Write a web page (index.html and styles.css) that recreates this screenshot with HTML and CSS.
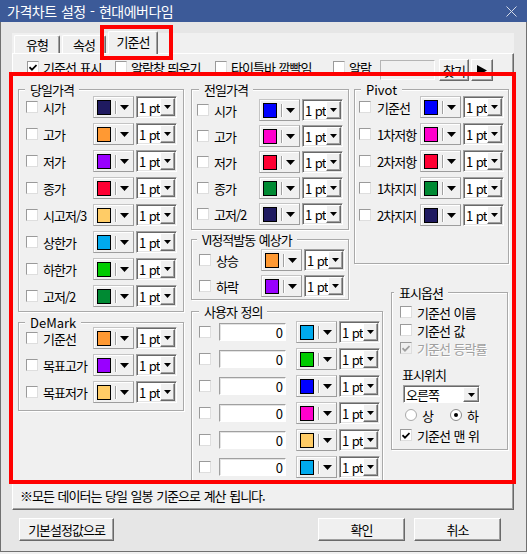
FILE: index.html
```html
<!DOCTYPE html>
<html lang="ko">
<head>
<meta charset="utf-8">
<title>가격차트 설정</title>
<link rel="stylesheet" href="styles.css">
</head>
<body>
<div class="window">
  <div class="titlebar">
    <span class="title">가격차트 설정 - 현대에버다임</span>
    <svg class="close" width="11" height="11" viewBox="0 0 11 11"><path d="M0.5 0.5L10.5 10.5M10.5 0.5L0.5 10.5" stroke="#d5dbe8" stroke-width="1" fill="none"/></svg>
  </div>
  <div class="frame">
    <div class="tabctl">
      <div class="tabs">
        <div class="tab t1">유형</div>
        <div class="tab t2">속성</div>
        <div class="tab t3">기준선</div>
      </div>
      <div class="panel">
        <div class="toprow">
          <div class="opt o1"><span class="cb"><svg width="8" height="7" viewBox="0 0 8 7"><path d="M0.5 3.2L3 5.7L7.5 1" fill="none" stroke="#000" stroke-width="1.7"/></svg></span><span>기준선 표시</span></div>
          <div class="opt o2"><span class="cb"></span><span>알람창 띄우기</span></div>
          <div class="opt o3"><span class="cb"></span><span>타이틀바 깜빡임</span></div>
          <div class="opt o4"><span class="cb"></span><span>알람</span></div>
          <span class="field"></span>
          <span class="btn find">찾기</span>
          <span class="btn play"><svg width="10" height="11" viewBox="0 0 10 11"><path d="M0 0L10 5.5L0 11Z"/></svg></span>
        </div>

        <div class="groups">
          <div class="col c1">
            <div class="group g-today">
              <div class="gt">당일가격</div>
              <div class="rows">
                <div class="row"><span class="cb"></span><span class="lbl">시가</span><span class="cc"><span class="sw k-navy"></span><span class="sep"></span><svg class="arr" width="9" height="5" viewBox="0 0 9 5"><path d="M0 0H9L4.5 5Z"/></svg></span><span class="pt"><span class="ptv">1 pt</span><span class="dd"><svg width="7" height="4" viewBox="0 0 7 4"><path d="M0 0H7L3.5 4Z"/></svg></span></span></div>
                <div class="row"><span class="cb"></span><span class="lbl">고가</span><span class="cc"><span class="sw k-orange"></span><span class="sep"></span><svg class="arr" width="9" height="5" viewBox="0 0 9 5"><path d="M0 0H9L4.5 5Z"/></svg></span><span class="pt"><span class="ptv">1 pt</span><span class="dd"><svg width="7" height="4" viewBox="0 0 7 4"><path d="M0 0H7L3.5 4Z"/></svg></span></span></div>
                <div class="row"><span class="cb"></span><span class="lbl">저가</span><span class="cc"><span class="sw k-purple"></span><span class="sep"></span><svg class="arr" width="9" height="5" viewBox="0 0 9 5"><path d="M0 0H9L4.5 5Z"/></svg></span><span class="pt"><span class="ptv">1 pt</span><span class="dd"><svg width="7" height="4" viewBox="0 0 7 4"><path d="M0 0H7L3.5 4Z"/></svg></span></span></div>
                <div class="row"><span class="cb"></span><span class="lbl">종가</span><span class="cc"><span class="sw k-red"></span><span class="sep"></span><svg class="arr" width="9" height="5" viewBox="0 0 9 5"><path d="M0 0H9L4.5 5Z"/></svg></span><span class="pt"><span class="ptv">1 pt</span><span class="dd"><svg width="7" height="4" viewBox="0 0 7 4"><path d="M0 0H7L3.5 4Z"/></svg></span></span></div>
                <div class="row"><span class="cb"></span><span class="lbl">시고저/3</span><span class="cc"><span class="sw k-cream"></span><span class="sep"></span><svg class="arr" width="9" height="5" viewBox="0 0 9 5"><path d="M0 0H9L4.5 5Z"/></svg></span><span class="pt"><span class="ptv">1 pt</span><span class="dd"><svg width="7" height="4" viewBox="0 0 7 4"><path d="M0 0H7L3.5 4Z"/></svg></span></span></div>
                <div class="row"><span class="cb"></span><span class="lbl">상한가</span><span class="cc"><span class="sw k-sky"></span><span class="sep"></span><svg class="arr" width="9" height="5" viewBox="0 0 9 5"><path d="M0 0H9L4.5 5Z"/></svg></span><span class="pt"><span class="ptv">1 pt</span><span class="dd"><svg width="7" height="4" viewBox="0 0 7 4"><path d="M0 0H7L3.5 4Z"/></svg></span></span></div>
                <div class="row"><span class="cb"></span><span class="lbl">하한가</span><span class="cc"><span class="sw k-lime"></span><span class="sep"></span><svg class="arr" width="9" height="5" viewBox="0 0 9 5"><path d="M0 0H9L4.5 5Z"/></svg></span><span class="pt"><span class="ptv">1 pt</span><span class="dd"><svg width="7" height="4" viewBox="0 0 7 4"><path d="M0 0H7L3.5 4Z"/></svg></span></span></div>
                <div class="row"><span class="cb"></span><span class="lbl">고저/2</span><span class="cc"><span class="sw k-green"></span><span class="sep"></span><svg class="arr" width="9" height="5" viewBox="0 0 9 5"><path d="M0 0H9L4.5 5Z"/></svg></span><span class="pt"><span class="ptv">1 pt</span><span class="dd"><svg width="7" height="4" viewBox="0 0 7 4"><path d="M0 0H7L3.5 4Z"/></svg></span></span></div>
              </div>
            </div>
            <div class="group g-demark">
              <div class="gt latin">DeMark</div>
              <div class="rows">
                <div class="row"><span class="cb"></span><span class="lbl">기준선</span><span class="cc"><span class="sw k-orange"></span><span class="sep"></span><svg class="arr" width="9" height="5" viewBox="0 0 9 5"><path d="M0 0H9L4.5 5Z"/></svg></span><span class="pt"><span class="ptv">1 pt</span><span class="dd"><svg width="7" height="4" viewBox="0 0 7 4"><path d="M0 0H7L3.5 4Z"/></svg></span></span></div>
                <div class="row"><span class="cb"></span><span class="lbl">목표고가</span><span class="cc"><span class="sw k-purple"></span><span class="sep"></span><svg class="arr" width="9" height="5" viewBox="0 0 9 5"><path d="M0 0H9L4.5 5Z"/></svg></span><span class="pt"><span class="ptv">1 pt</span><span class="dd"><svg width="7" height="4" viewBox="0 0 7 4"><path d="M0 0H7L3.5 4Z"/></svg></span></span></div>
                <div class="row"><span class="cb"></span><span class="lbl">목표저가</span><span class="cc"><span class="sw k-cream"></span><span class="sep"></span><svg class="arr" width="9" height="5" viewBox="0 0 9 5"><path d="M0 0H9L4.5 5Z"/></svg></span><span class="pt"><span class="ptv">1 pt</span><span class="dd"><svg width="7" height="4" viewBox="0 0 7 4"><path d="M0 0H7L3.5 4Z"/></svg></span></span></div>
              </div>
            </div>
          </div>

          <div class="col c2">
            <div class="group g-prev">
              <div class="gt">전일가격</div>
              <div class="rows">
                <div class="row"><span class="cb"></span><span class="lbl">시가</span><span class="cc"><span class="sw k-blue"></span><span class="sep"></span><svg class="arr" width="9" height="5" viewBox="0 0 9 5"><path d="M0 0H9L4.5 5Z"/></svg></span><span class="pt"><span class="ptv">1 pt</span><span class="dd"><svg width="7" height="4" viewBox="0 0 7 4"><path d="M0 0H7L3.5 4Z"/></svg></span></span></div>
                <div class="row"><span class="cb"></span><span class="lbl">고가</span><span class="cc"><span class="sw k-mag"></span><span class="sep"></span><svg class="arr" width="9" height="5" viewBox="0 0 9 5"><path d="M0 0H9L4.5 5Z"/></svg></span><span class="pt"><span class="ptv">1 pt</span><span class="dd"><svg width="7" height="4" viewBox="0 0 7 4"><path d="M0 0H7L3.5 4Z"/></svg></span></span></div>
                <div class="row"><span class="cb"></span><span class="lbl">저가</span><span class="cc"><span class="sw k-red"></span><span class="sep"></span><svg class="arr" width="9" height="5" viewBox="0 0 9 5"><path d="M0 0H9L4.5 5Z"/></svg></span><span class="pt"><span class="ptv">1 pt</span><span class="dd"><svg width="7" height="4" viewBox="0 0 7 4"><path d="M0 0H7L3.5 4Z"/></svg></span></span></div>
                <div class="row"><span class="cb"></span><span class="lbl">종가</span><span class="cc"><span class="sw k-green"></span><span class="sep"></span><svg class="arr" width="9" height="5" viewBox="0 0 9 5"><path d="M0 0H9L4.5 5Z"/></svg></span><span class="pt"><span class="ptv">1 pt</span><span class="dd"><svg width="7" height="4" viewBox="0 0 7 4"><path d="M0 0H7L3.5 4Z"/></svg></span></span></div>
                <div class="row"><span class="cb"></span><span class="lbl">고저/2</span><span class="cc"><span class="sw k-navy"></span><span class="sep"></span><svg class="arr" width="9" height="5" viewBox="0 0 9 5"><path d="M0 0H9L4.5 5Z"/></svg></span><span class="pt"><span class="ptv">1 pt</span><span class="dd"><svg width="7" height="4" viewBox="0 0 7 4"><path d="M0 0H7L3.5 4Z"/></svg></span></span></div>
              </div>
            </div>
            <div class="group g-vi">
              <div class="gt">VI정적발동 예상가</div>
              <div class="rows">
                <div class="row"><span class="cb"></span><span class="lbl">상승</span><span class="cc"><span class="sw k-orange"></span><span class="sep"></span><svg class="arr" width="9" height="5" viewBox="0 0 9 5"><path d="M0 0H9L4.5 5Z"/></svg></span><span class="pt"><span class="ptv">1 pt</span><span class="dd"><svg width="7" height="4" viewBox="0 0 7 4"><path d="M0 0H7L3.5 4Z"/></svg></span></span></div>
                <div class="row"><span class="cb"></span><span class="lbl">하락</span><span class="cc"><span class="sw k-purple"></span><span class="sep"></span><svg class="arr" width="9" height="5" viewBox="0 0 9 5"><path d="M0 0H9L4.5 5Z"/></svg></span><span class="pt"><span class="ptv">1 pt</span><span class="dd"><svg width="7" height="4" viewBox="0 0 7 4"><path d="M0 0H7L3.5 4Z"/></svg></span></span></div>
              </div>
            </div>
            <div class="group g-user">
              <div class="gt">사용자 정의</div>
              <div class="rows">
                <div class="row"><span class="cb"></span><span class="inp">0</span><span class="cc"><span class="sw k-sky"></span><span class="sep"></span><svg class="arr" width="9" height="5" viewBox="0 0 9 5"><path d="M0 0H9L4.5 5Z"/></svg></span><span class="pt"><span class="ptv">1 pt</span><span class="dd"><svg width="7" height="4" viewBox="0 0 7 4"><path d="M0 0H7L3.5 4Z"/></svg></span></span></div>
                <div class="row"><span class="cb"></span><span class="inp">0</span><span class="cc"><span class="sw k-lime"></span><span class="sep"></span><svg class="arr" width="9" height="5" viewBox="0 0 9 5"><path d="M0 0H9L4.5 5Z"/></svg></span><span class="pt"><span class="ptv">1 pt</span><span class="dd"><svg width="7" height="4" viewBox="0 0 7 4"><path d="M0 0H7L3.5 4Z"/></svg></span></span></div>
                <div class="row"><span class="cb"></span><span class="inp">0</span><span class="cc"><span class="sw k-blue"></span><span class="sep"></span><svg class="arr" width="9" height="5" viewBox="0 0 9 5"><path d="M0 0H9L4.5 5Z"/></svg></span><span class="pt"><span class="ptv">1 pt</span><span class="dd"><svg width="7" height="4" viewBox="0 0 7 4"><path d="M0 0H7L3.5 4Z"/></svg></span></span></div>
                <div class="row"><span class="cb"></span><span class="inp">0</span><span class="cc"><span class="sw k-mag"></span><span class="sep"></span><svg class="arr" width="9" height="5" viewBox="0 0 9 5"><path d="M0 0H9L4.5 5Z"/></svg></span><span class="pt"><span class="ptv">1 pt</span><span class="dd"><svg width="7" height="4" viewBox="0 0 7 4"><path d="M0 0H7L3.5 4Z"/></svg></span></span></div>
                <div class="row"><span class="cb"></span><span class="inp">0</span><span class="cc"><span class="sw k-cream"></span><span class="sep"></span><svg class="arr" width="9" height="5" viewBox="0 0 9 5"><path d="M0 0H9L4.5 5Z"/></svg></span><span class="pt"><span class="ptv">1 pt</span><span class="dd"><svg width="7" height="4" viewBox="0 0 7 4"><path d="M0 0H7L3.5 4Z"/></svg></span></span></div>
                <div class="row"><span class="cb"></span><span class="inp">0</span><span class="cc"><span class="sw k-sky"></span><span class="sep"></span><svg class="arr" width="9" height="5" viewBox="0 0 9 5"><path d="M0 0H9L4.5 5Z"/></svg></span><span class="pt"><span class="ptv">1 pt</span><span class="dd"><svg width="7" height="4" viewBox="0 0 7 4"><path d="M0 0H7L3.5 4Z"/></svg></span></span></div>
              </div>
            </div>
          </div>

          <div class="col c3">
            <div class="group g-pivot">
              <div class="gt latin">Pivot</div>
              <div class="rows">
                <div class="row"><span class="cb"></span><span class="lbl">기준선</span><span class="cc"><span class="sw k-blue"></span><span class="sep"></span><svg class="arr" width="9" height="5" viewBox="0 0 9 5"><path d="M0 0H9L4.5 5Z"/></svg></span><span class="pt"><span class="ptv">1 pt</span><span class="dd"><svg width="7" height="4" viewBox="0 0 7 4"><path d="M0 0H7L3.5 4Z"/></svg></span></span></div>
                <div class="row"><span class="cb"></span><span class="lbl">1차저항</span><span class="cc"><span class="sw k-mag"></span><span class="sep"></span><svg class="arr" width="9" height="5" viewBox="0 0 9 5"><path d="M0 0H9L4.5 5Z"/></svg></span><span class="pt"><span class="ptv">1 pt</span><span class="dd"><svg width="7" height="4" viewBox="0 0 7 4"><path d="M0 0H7L3.5 4Z"/></svg></span></span></div>
                <div class="row"><span class="cb"></span><span class="lbl">2차저항</span><span class="cc"><span class="sw k-red"></span><span class="sep"></span><svg class="arr" width="9" height="5" viewBox="0 0 9 5"><path d="M0 0H9L4.5 5Z"/></svg></span><span class="pt"><span class="ptv">1 pt</span><span class="dd"><svg width="7" height="4" viewBox="0 0 7 4"><path d="M0 0H7L3.5 4Z"/></svg></span></span></div>
                <div class="row"><span class="cb"></span><span class="lbl">1차지지</span><span class="cc"><span class="sw k-green"></span><span class="sep"></span><svg class="arr" width="9" height="5" viewBox="0 0 9 5"><path d="M0 0H9L4.5 5Z"/></svg></span><span class="pt"><span class="ptv">1 pt</span><span class="dd"><svg width="7" height="4" viewBox="0 0 7 4"><path d="M0 0H7L3.5 4Z"/></svg></span></span></div>
                <div class="row"><span class="cb"></span><span class="lbl">2차지지</span><span class="cc"><span class="sw k-navy"></span><span class="sep"></span><svg class="arr" width="9" height="5" viewBox="0 0 9 5"><path d="M0 0H9L4.5 5Z"/></svg></span><span class="pt"><span class="ptv">1 pt</span><span class="dd"><svg width="7" height="4" viewBox="0 0 7 4"><path d="M0 0H7L3.5 4Z"/></svg></span></span></div>
              </div>
            </div>
            <div class="group g-opt">
              <div class="gt">표시옵션</div>
              <div class="orow"><span class="cb"></span><span class="olbl">기준선 이름</span></div>
              <div class="orow"><span class="cb"></span><span class="olbl">기준선 값</span></div>
              <div class="orow dis"><span class="cb cb-dis"><svg width="8" height="7" viewBox="0 0 8 7"><path d="M0.5 3.2L3 5.7L7.5 1" fill="none" stroke="#a0a0a0" stroke-width="1.7"/></svg></span><span class="olbl">기준선 등락률</span></div>
              <div class="poslbl">표시위치</div>
              <div class="sel"><span class="selv">오른쪽</span><span class="dd"><svg width="7" height="4" viewBox="0 0 7 4"><path d="M0 0H7L3.5 4Z"/></svg></span></div>
              <div class="radios">
                <div class="ritem r1"><svg width="12" height="12" viewBox="0 0 12 12"><circle cx="6" cy="6" r="5.5" fill="#fff" stroke="#a8a8a8"/></svg><span class="olbl">상</span></div>
                <div class="ritem r2"><svg width="12" height="12" viewBox="0 0 12 12"><circle cx="6" cy="6" r="5.5" fill="#fff" stroke="#8a8a8a"/><circle cx="6" cy="6" r="2" fill="#000"/></svg><span class="olbl">하</span></div>
              </div>
              <div class="orow last"><span class="cb"><svg width="8" height="7" viewBox="0 0 8 7"><path d="M0.5 3.2L3 5.7L7.5 1" fill="none" stroke="#000" stroke-width="1.7"/></svg></span><span class="olbl">기준선 맨 위</span></div>
            </div>
          </div>
        </div>

        <div class="note">※모든 데이터는 당일 일봉 기준으로 계산 됩니다.</div>
      </div>
    </div>
    <div class="btnrow">
      <span class="btn b1">기본설정값으로</span>
      <span class="btn b2">확인</span>
      <span class="btn b3">취소</span>
    </div>
  </div>
  <div class="mark mark-tab"></div>
  <div class="mark mark-panel"></div>
</div>
</body>
</html>
```
FILE: styles.css
```css
* { box-sizing: border-box; }

body {
  margin: 0;
  background: #f0f0f0;
  font-family: "Noto Sans CJK KR", "Noto Sans", sans-serif;
  font-size: 13px;
  letter-spacing: -1px;
  word-spacing: 1px;
  line-height: 13px;
  color: #000;
}

.window {
  position: relative;
  width: 527px;
  height: 554px;
}

/* title bar */
.titlebar {
  height: 22px;
  background: #3c5a98;
  display: flex;
  align-items: center;
  padding-left: 7px;
  color: #fff;
}
.title { font-size: 14px; letter-spacing: -0.5px; word-spacing: 1px; line-height: 16px; }
.close { margin-left: auto; margin-right: 10px; }

/* frame */
.frame {
  height: 530px;
  background: #e6e6e6;
  border: 1px solid #707070;
  border-top: 0;
  padding: 11px 0 0 11px;
}

.tabctl {
  width: 502px;
  background: #f0f0f0;
}

.tabs {
  display: flex;
  align-items: flex-end;
  height: 20px;
  padding-left: 2px;
}
.tab {
  height: 18px;
  border-top: 1px solid #fff;
  border-left: 1px solid #fff;
  border-right: 1px solid #696969;
  box-shadow: inset -1px 0 0 #a0a0a0;
  background: #f0f0f0;
  display: flex;
  align-items: center;
  justify-content: center;
  border-radius: 2px 2px 0 0;
}
.t1 { width: 46px; margin-right: 2px; }
.t2 { width: 44px; margin-right: 2px; }
.t3 {
  width: 50px;
  height: 23px;
  margin-bottom: -1px;
  padding-bottom: 3px;
  position: relative;
  z-index: 1;
}

.panel {
  height: 457px;
  border: 1px solid;
  border-color: #fff #696969 #696969 #fff;
  box-shadow: inset -1px -1px 0 #a0a0a0;
  padding-top: 6px;
}

/* top option row */
.toprow {
  display: flex;
  align-items: flex-start;
  height: 21px;
  padding-left: 14px;
}
.opt {
  display: flex;
  align-items: center;
  height: 14px;
  white-space: nowrap;
}
.opt .cb { margin-right: 4px; }
.o1 { width: 88px; }
.o2 { width: 100px; }
.o3 { width: 118px; }
.o4 { width: 47px; }

.field {
  width: 55px;
  height: 20px;
  border: 1px solid;
  border-color: #b4b4b4 #fff #fff #b4b4b4;
  margin-right: 4px;
}

.btn {
  display: flex;
  align-items: center;
  justify-content: center;
  background: #f0f0f0;
  border: 1px solid;
  border-color: #fff #696969 #696969 #fff;
  box-shadow: inset -1px -1px 0 #a0a0a0;
  white-space: nowrap;
}
.find { width: 30px; height: 22px; margin-top: -1px; margin-right: 2px; }
.play { width: 22px; height: 22px; margin-top: -1px; }

/* checkbox */
.cb {
  width: 12px;
  height: 12px;
  flex: none;
  background: #fff;
  border: 1px solid;
  border-color: #9a9a9a #dedede #dedede #9a9a9a;
  display: flex;
  align-items: center;
  justify-content: center;
}
.cb-dis { background: #f0f0f0; }

/* groups */
.groups {
  display: flex;
  align-items: flex-start;
  margin-top: 8px;
  padding-left: 5px;
}
.col { display: flex; flex-direction: column; }
.c1 { width: 166px; }
.c2 { width: 158px; margin-left: 7px; }
.c3 { width: 155px; margin-left: 5px; }

.group {
  border: 1px solid #a9a9a9;
  box-shadow: 1px 1px 0 #fff, inset 1px 1px 0 #fff;
}
.gt {
  width: max-content;
  height: 13px;
  line-height: 13px;
  margin-top: -7px;
  margin-left: 6px;
  padding: 0 5px;
  background: #f0f0f0;
  white-space: nowrap;
}
.latin { letter-spacing: 0; }

.rows { display: flex; flex-direction: column; }
.row {
  display: flex;
  align-items: center;
  height: 22px;
}
.lbl {
  margin-left: 5px;
  white-space: nowrap;
  flex: none;
}

.g-today .rows { padding: 0 0 4px 7px; gap: 5px; }
.g-today .lbl, .g-demark .lbl { width: 50px; }

.g-demark { margin-top: 10px; }
.g-demark .gt { margin-bottom: -2px; }
.g-demark .rows { padding: 0 0 7px 7px; gap: 5px; }

.g-prev .gt { margin-left: 7px; margin-bottom: 3px; }
.g-prev .rows { padding: 0 0 4px 5px; gap: 4px; }
.g-prev .lbl, .g-vi .lbl { width: 45px; }

.g-vi { margin-top: 9px; }
.g-vi .gt { margin-left: 5px; margin-bottom: 3px; }
.g-vi .rows { padding: 0 0 2px 7px; gap: 4px; }

.g-user { margin-top: 11px; width: 192px; }
.g-user .gt { margin-left: 7px; margin-bottom: 3px; }
.g-user .rows { padding: 0 0 2px 7px; gap: 5px; }
.g-user .cc { margin-left: 10px; }

.g-pivot .rows { padding: 0 0 37px 4px; gap: 5px; }
.g-pivot .lbl { width: 43px; margin-left: 6px; }

/* colour combo */
.cc {
  width: 41px;
  height: 22px;
  flex: none;
  display: flex;
  align-items: center;
  padding-left: 3px;
  border: 1px solid;
  border-color: #c4c4c4 #9d9d9d #9d9d9d #c4c4c4;
  box-shadow: inset 1px 1px 0 #fff;
}
.sw { width: 14px; height: 15px; border: 1px solid #000; flex: none; }
.sep {
  width: 2px;
  height: 13px;
  margin-left: 4px;
  border-left: 1px solid #a0a0a0;
  border-right: 1px solid #fff;
}
.arr { margin-left: 3px; flex: none; }

.k-navy { background: #1f1a60; }
.k-orange { background: #ff9933; }
.k-purple { background: #9900ff; }
.k-red { background: #ff0033; }
.k-cream { background: #ffcc66; }
.k-sky { background: #00aaee; }
.k-lime { background: #00cc00; }
.k-green { background: #008a33; }
.k-blue { background: #0000ff; }
.k-mag { background: #ff00cc; }

/* line width combo */
.pt {
  width: 41px;
  height: 22px;
  flex: none;
  margin-left: 2px;
  display: flex;
  background: #fff;
  border: 1px solid;
  border-color: #a0a0a0 #fff #fff #a0a0a0;
  box-shadow: inset 1px 1px 0 #696969, inset -1px -1px 0 #e3e3e3;
  padding: 1px 1px 1px 2px;
}
.ptv {
  flex: 1;
  display: flex;
  align-items: center;
  letter-spacing: -0.6px;
  word-spacing: 0;
  white-space: nowrap;
  overflow: hidden;
}
.dd {
  width: 15px;
  flex: none;
  background: #f0f0f0;
  border: 1px solid;
  border-color: #fff #696969 #696969 #fff;
  box-shadow: inset -1px -1px 0 #a0a0a0;
  display: flex;
  align-items: center;
  justify-content: center;
}

/* user input */
.inp {
  width: 67px;
  height: 18px;
  flex: none;
  margin-left: 8px;
  background: #fff;
  border: 1px solid;
  border-color: #a0a0a0 #fff #fff #a0a0a0;
  box-shadow: inset 1px 1px 0 #e3e3e3;
  display: flex;
  align-items: center;
  justify-content: flex-end;
  padding-right: 2px;
  letter-spacing: 0;
}

/* display options */
.g-opt { margin-top: 28px; margin-left: 37px; width: 117px; }
.g-opt .gt { margin-left: 2px; margin-bottom: 4px; }
.orow {
  display: flex;
  align-items: center;
  height: 18px;
  padding-left: 8px;
}
.olbl { margin-left: 5px; white-space: nowrap; }
.dis { color: #a0a0a0; text-shadow: 1px 1px 0 #fff; }
.poslbl {
  height: 18px;
  margin-top: 8px;
  padding-left: 10px;
  display: flex;
  align-items: center;
}
.sel {
  width: 77px;
  height: 18px;
  margin: 2px 0 0 11px;
  display: flex;
  background: #fff;
  border: 1px solid;
  border-color: #a0a0a0 #fff #fff #a0a0a0;
  box-shadow: inset 1px 1px 0 #696969;
  padding: 1px 0 0 1px;
}
.selv { flex: 1; display: flex; align-items: center; padding-left: 1px; }
.sel .dd { width: 16px; }
.radios {
  display: flex;
  align-items: center;
  height: 18px;
  margin-top: 3px;
  padding-left: 13px;
}
.ritem { display: flex; align-items: center; }
.ritem svg { flex: none; }
.r1 { width: 45px; }
.orow.last { margin-top: 2px; margin-bottom: 5px; }

.note {
  margin-top: 8px;
  padding-left: 7px;
  line-height: 14px;
  white-space: nowrap;
}

/* bottom buttons */
.btnrow {
  display: flex;
  width: 482px;
  margin: 8px 0 0 7px;
}
.btnrow .btn { height: 23px; }
.b1 { width: 95px; }
.b2 { width: 87px; margin-left: auto; }
.b3 { width: 87px; margin-left: 9px; }

/* red annotation rectangles drawn over the dialog */
.mark {
  position: absolute;
  border: 4px solid #ff0000;
  pointer-events: none;
  z-index: 5;
}
.mark-tab { left: 100px; top: 25px; width: 73px; height: 35px; }
.mark-panel { left: 9px; top: 72px; width: 507px; height: 412px; }
```
